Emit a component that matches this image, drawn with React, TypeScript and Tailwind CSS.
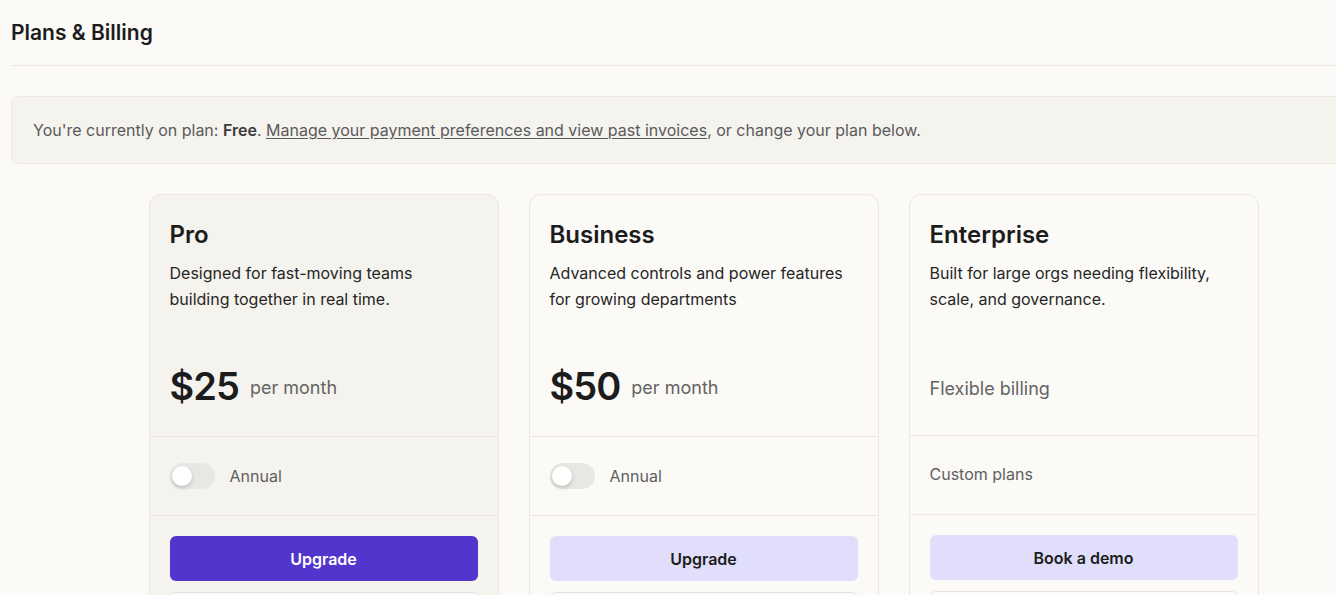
import { useState } from 'react'

interface Plan {
  id: string
  name: string
  blurb: string[]
  price?: string
  priceNote: string
  billing: 'toggle' | 'custom'
  cta: string
  primary: boolean
  highlighted: boolean
}

const PLANS: Plan[] = [
  {
    id: 'pro',
    name: 'Pro',
    blurb: ['Designed for fast-moving teams', 'building together in real time.'],
    price: '$25',
    priceNote: 'per month',
    billing: 'toggle',
    cta: 'Upgrade',
    primary: true,
    highlighted: true,
  },
  {
    id: 'business',
    name: 'Business',
    blurb: ['Advanced controls and power features', 'for growing departments'],
    price: '$50',
    priceNote: 'per month',
    billing: 'toggle',
    cta: 'Upgrade',
    primary: false,
    highlighted: false,
  },
  {
    id: 'enterprise',
    name: 'Enterprise',
    blurb: ['Built for large orgs needing flexibility,', 'scale, and governance.'],
    priceNote: 'Flexible billing',
    billing: 'custom',
    cta: 'Book a demo',
    primary: false,
    highlighted: false,
  },
]

function Toggle({ on, onChange }: { on: boolean; onChange: () => void }) {
  return (
    <button
      onClick={onChange}
      aria-pressed={on}
      className={`relative w-[45px] h-[26px] rounded-full transition-colors ${on ? 'bg-[#5235cc]' : 'bg-[#e9e7e3]'}`}
    >
      <span
        className={`absolute top-[3px] w-5 h-5 rounded-full bg-white shadow-[0_2px_4px_rgba(0,0,0,0.18)] transition-all ${on ? 'left-[22px]' : 'left-[2px]'}`}
      />
    </button>
  )
}

function PlanCard({ plan }: { plan: Plan }) {
  const [annual, setAnnual] = useState(false)

  return (
    <div
      className={`w-[350px] shrink-0 rounded-xl border border-[#ebe8e3] ${plan.highlighted ? 'bg-[#f5f3ee]' : 'bg-[#fbfaf7]'}`}
    >
      {/* Header */}
      <div
        className={`${plan.price ? 'h-[242px]' : 'h-[241px]'} px-5 pt-6 border-b border-[#ebe8e3] flex flex-col`}
      >
        <h2 className="text-2xl leading-8 font-semibold text-[#1c1c1c]">{plan.name}</h2>
        <p className="mt-[9px] text-base leading-[26px] text-[#262626]">
          {plan.blurb[0]}
          <br />
          {plan.blurb[1]}
        </p>
        {plan.price ? (
          <div className="mt-[51px] flex items-center gap-[11px]">
            <span className="text-[38px] leading-[46px] font-semibold text-[#1c1c1c] tracking-tight">{plan.price}</span>
            <span className="text-lg text-[#646464] mt-[3px]">{plan.priceNote}</span>
          </div>
        ) : (
          <div className="mt-[63px] text-lg leading-7 text-[#646464]">{plan.priceNote}</div>
        )}
      </div>

      {/* Billing period */}
      <div className="h-[79px] px-5 flex items-center gap-[15px] border-b border-[#ebe8e3]">
        {plan.billing === 'toggle' ? (
          <>
            <Toggle on={annual} onChange={() => setAnnual(a => !a)} />
            <span className="text-base text-[#5f5f5f]">Annual</span>
          </>
        ) : (
          <span className="text-base text-[#5f5f5f] -mt-[2px]">Custom plans</span>
        )}
      </div>

      {/* Actions */}
      <div className="px-5 pt-[20px] pb-5 flex flex-col gap-[11px]">
        <button
          className={`h-[45px] rounded-md text-base font-semibold ${
            plan.primary ? 'bg-[#5235cc] text-white' : 'bg-[#e0defa] text-[#1c1c1c]'
          }`}
        >
          {plan.cta}
        </button>
        <button className="h-[44px] rounded-md border border-[#e6e3de] bg-[#fdfcfa] text-base font-medium text-[#1c1c1c]">
          Compare plans
        </button>
      </div>
    </div>
  )
}

export default function App() {
  return (
    <div
      className="h-[595px] overflow-hidden bg-[#fbfaf7] text-[#1c1c1c]"
      style={{ fontFamily: 'Inter, "Noto Sans", sans-serif' }}
    >
      <div className="ml-[11px] w-[1385px]">
        {/* Page header */}
        <div className="h-[66px] flex items-center border-b border-[#ebe8e3]">
          <h1 className="text-[21px] font-semibold text-[#1c1c1c]">Plans &amp; Billing</h1>
        </div>

        {/* Current plan banner */}
        <div className="mt-[30px] h-[68px] px-[21px] flex items-center rounded-lg border border-[#ebe8e3] bg-[#f5f3ee]">
          <p className="text-base text-[#5a5a5a]">
            You're currently on plan: <span className="font-semibold text-[#3a3a3a]">Free</span>.{' '}
            <a href="#" className="underline underline-offset-2">
              Manage your payment preferences and view past invoices
            </a>
            , or change your plan below.
          </p>
        </div>

        {/* Plans */}
        <div className="mt-[30px] flex justify-center gap-[30px]">
          {PLANS.map(p => (
            <PlanCard key={p.id} plan={p} />
          ))}
        </div>
      </div>
    </div>
  )
}
